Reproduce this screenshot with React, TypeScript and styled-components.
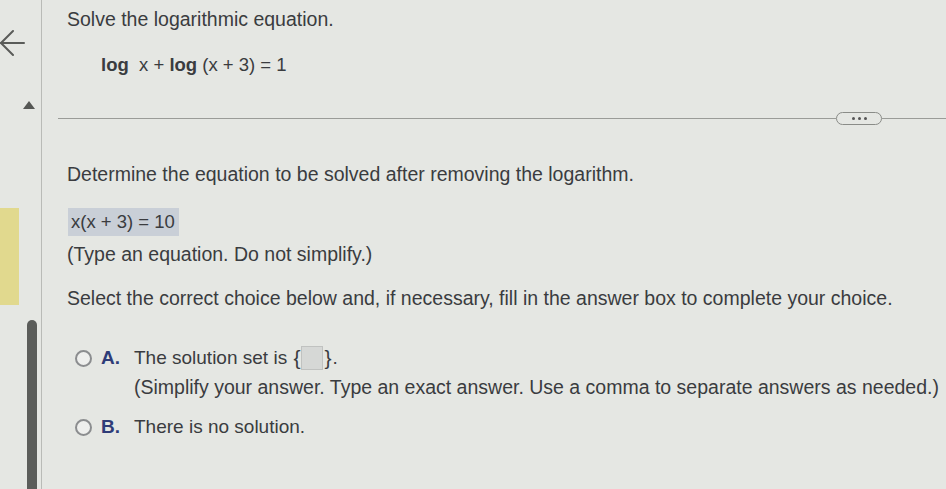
import React from "react";
import styled, { createGlobalStyle } from "styled-components";

const Global = createGlobalStyle`
  html, body { margin: 0; padding: 0; }
  body {
    background: #e4e6e2;
    font-family: "Liberation Sans", Arial, sans-serif;
    color: #3a3c3f;
    overflow: hidden;
  }
`;

const Page = styled.div`
  display: flex;
  width: 946px;
  height: 489px;
  background: #e5e7e3;
  overflow: hidden;
`;

const Sidebar = styled.div`
  width: 41px;
  flex-shrink: 0;
  border-right: 1px solid #b9bbb7;
  display: flex;
  flex-direction: column;
`;

const BackArrow = styled.svg`
  margin-top: 29px;
  width: 26px;
  height: 28px;
  display: block;
`;

const Caret = styled.div`
  margin-top: 44px;
  margin-left: 23px;
  width: 0;
  height: 0;
  border-left: 6px solid transparent;
  border-right: 6px solid transparent;
  border-bottom: 8px solid #555754;
`;

const YellowTab = styled.div`
  margin-top: 99px;
  width: 19px;
  height: 97px;
  background: #e1d98e;
`;

const ScrollBar = styled.div`
  margin-top: 15px;
  margin-left: 27px;
  width: 10px;
  flex: 1;
  background: #5b5d5a;
  border-radius: 5px 5px 0 0;
`;

const Main = styled.div`
  flex: 1;
  min-width: 0;
  display: flex;
  flex-direction: column;
`;

const Text = styled.div<{ $top: number; $left?: number; $size?: number }>`
  margin-top: ${(p) => p.$top}px;
  padding-left: ${(p) => p.$left ?? 25}px;
  font-size: ${(p) => p.$size ?? 19.5}px;
  line-height: 20px;
  white-space: nowrap;
`;

const Bold = styled.b`
  font-weight: 700;
`;

const DividerRow = styled.div`
  margin-top: 36px;
  margin-left: 16px;
  height: 14px;
  display: flex;
  align-items: center;
`;

const Line = styled.div<{ $grow?: boolean }>`
  height: 1px;
  background: #9a9c98;
  flex: ${(p) => (p.$grow ? 1 : "0 0 auto")};
  width: ${(p) => (p.$grow ? "auto" : "64px")};
`;

const MorePill = styled.div`
  width: 44px;
  height: 11px;
  border: 1.5px solid #8a8c88;
  border-radius: 7px;
  display: flex;
  align-items: center;
  justify-content: center;
  gap: 3px;
`;

const Dot = styled.span`
  width: 3px;
  height: 3px;
  background: #555;
  border-radius: 50%;
`;

const AnswerBox = styled.div`
  margin-top: 24px;
  margin-left: 26px;
  width: 111px;
  height: 28px;
  background: #c9cfd7;
  font-size: 18.5px;
  line-height: 28px;
  padding-left: 3px;
  box-sizing: border-box;
  white-space: nowrap;
`;

const OptionRow = styled.div<{ $top: number }>`
  margin-top: ${(p) => p.$top}px;
  display: flex;
  align-items: center;
  height: 20px;
  font-size: 19px;
  white-space: nowrap;
`;

const Radio = styled.span`
  margin-left: 33px;
  width: 13px;
  height: 13px;
  border: 2px solid #8b8d8f;
  border-radius: 50%;
  background: #eeefed;
`;

const Letter = styled.span`
  margin-left: 9px;
  width: 33px;
  font-weight: 700;
  color: #2e3c78;
`;

const Brace = styled.span`
  font-size: 21px;
  margin: 0 1px;
`;

const EmptyBox = styled.span`
  display: inline-block;
  width: 20px;
  height: 22px;
  background: #d6d8d6;
  border: 1px solid #c0c2c0;
  vertical-align: middle;
`;

export default function App() {
  return (
    <>
      <Global />
      <Page>
        <Sidebar>
          <BackArrow viewBox="0 0 26 28" fill="none" stroke="#5a5c59" strokeWidth="2" strokeLinecap="round" strokeLinejoin="round">
            <path d="M24 14H1" />
            <path d="M13 2L1 14l12 12" />
          </BackArrow>
          <Caret />
          <YellowTab />
          <ScrollBar />
        </Sidebar>
        <Main>
          <Text $top={9}>Solve the logarithmic equation.</Text>
          <Text $top={26} $left={59} $size={18.5}>
            <Bold>log</Bold>&nbsp; x + <Bold>log</Bold> (x + 3) = 1
          </Text>
          <DividerRow>
            <Line $grow />
            <MorePill>
              <Dot />
              <Dot />
              <Dot />
            </MorePill>
            <Line />
          </DividerRow>
          <Text $top={39}>Determine the equation to be solved after removing the logarithm.</Text>
          <AnswerBox>x(x + 3) = 10</AnswerBox>
          <Text $top={8}>(Type an equation. Do not simplify.)</Text>
          <Text $top={24}>Select the correct choice below and, if necessary, fill in the answer box to complete your choice.</Text>
          <OptionRow $top={40}>
            <Radio />
            <Letter>A.</Letter>
            The solution set is&nbsp;
            <Brace>{"{"}</Brace>
            <EmptyBox />
            <Brace>{"}"}</Brace>.
          </OptionRow>
          <Text $top={9} $left={92}>
            (Simplify your answer. Type an exact answer. Use a comma to separate answers as needed.)
          </Text>
          <OptionRow $top={20}>
            <Radio />
            <Letter>B.</Letter>
            There is no solution.
          </OptionRow>
        </Main>
      </Page>
    </>
  );
}
